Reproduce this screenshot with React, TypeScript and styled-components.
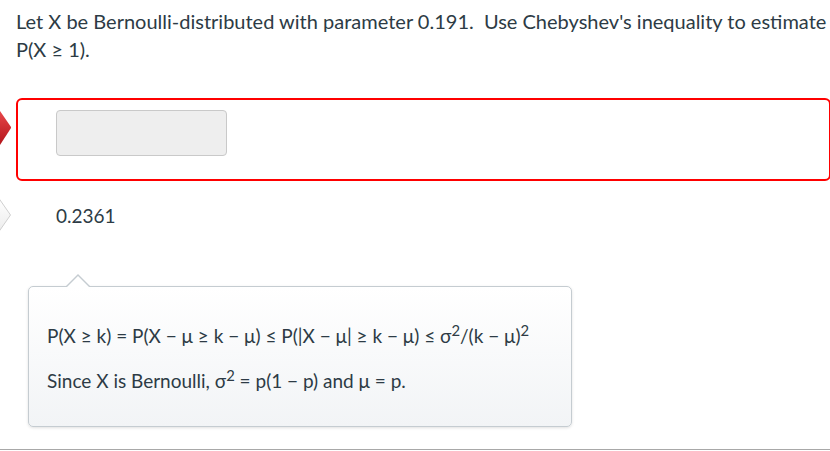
import React from "react";
import styled, { createGlobalStyle } from "styled-components";

const GlobalStyle = createGlobalStyle`
  html, body {
    margin: 0;
    padding: 0;
    background: #fff;
  }
  body {
    font-family: Lato, "Open Sans", sans-serif;
    color: #2d3b45;
    overflow: hidden;
  }
`;

const Page = styled.div`
  width: 830px;
  height: 451px;
  display: flex;
  flex-direction: column;
  overflow: hidden;
`;

const Question = styled.p`
  margin: 0;
  padding: 7px 0 0 16px;
  font-size: 20px;
  line-height: 28px;
  white-space: pre-wrap;
`;

const AnswerRow = styled.div<{ $top: number; $tip: number }>`
  display: flex;
  align-items: flex-start;
  margin-top: ${(p) => p.$top}px;
  & > svg {
    flex: none;
    margin-top: ${(p) => p.$tip}px;
  }
`;

const WrongBox = styled.div`
  flex: none;
  width: 815px;
  box-sizing: border-box;
  margin-left: 4px;
  border: 2px solid #ff0000;
  border-radius: 6px;
  padding: 10px 0 23px 38px;
`;

const Blank = styled.div`
  width: 171px;
  height: 46px;
  box-sizing: border-box;
  background: #eeeeee;
  border: 1px solid #c9c9c9;
  border-radius: 4px;
`;

const CorrectValue = styled.div`
  margin-left: 44px;
  font-size: 19px;
  line-height: 28px;
  padding-top: 4px;
`;

const Popover = styled.div`
  position: relative;
  margin: 54px 0 0 28px;
  width: 544px;
  height: 141px;
  box-sizing: border-box;
  border: 1px solid #c5ccd1;
  border-radius: 5px;
  background: linear-gradient(#ffffff, #f2f4f6);
  box-shadow: 0 1px 3px rgba(0, 0, 0, 0.12);
  padding: 35px 0 0 18px;
  font-size: 19px;
  line-height: 28px;

  &::before,
  &::after {
    content: "";
    position: absolute;
    left: 37px;
    width: 0;
    height: 0;
    border-left: 12px solid transparent;
    border-right: 12px solid transparent;
  }
  &::before {
    top: -13px;
    border-bottom: 12px solid #c5ccd1;
  }
  &::after {
    top: -11px;
    border-bottom: 12px solid #ffffff;
  }
`;

const Line = styled.div<{ $gap?: number }>`
  margin-top: ${(p) => p.$gap ?? 0}px;
  white-space: nowrap;
  sup {
    font-size: 0.78em;
    line-height: 0;
    vertical-align: 0.5em;
  }
`;

const Divider = styled.div`
  margin-top: auto;
  margin-bottom: 1px;
  height: 1px;
  background: #a8a8a8;
`;

const WrongArrow = () => (
  <svg width="12" height="36" viewBox="0 0 12 36">
    <defs>
      <linearGradient id="redg" x1="0" y1="0" x2="0" y2="1">
        <stop offset="0" stopColor="#e8474a" />
        <stop offset="1" stopColor="#b3141a" />
      </linearGradient>
    </defs>
    <polygon points="0,0 11,16 11,17 0,34" fill="url(#redg)" />
  </svg>
);

const RightArrow = () => (
  <svg width="12" height="34" viewBox="0 0 12 34">
    <defs>
      <linearGradient id="grayg" x1="0" y1="0" x2="0" y2="1">
        <stop offset="0" stopColor="#ffffff" />
        <stop offset="1" stopColor="#ececec" />
      </linearGradient>
    </defs>
    <polygon
      points="-1,0.5 10.5,17 -1,33.5"
      fill="url(#grayg)"
      stroke="#cfcfcf"
      strokeWidth="1"
    />
  </svg>
);

export default function App() {
  return (
    <Page>
      <GlobalStyle />
      <Question>
        {"Let X be Bernoulli-distributed with parameter 0.191.  Use Chebyshev's inequality to estimate\nP(X \u2265 1)."}
      </Question>
      <AnswerRow $top={35} $tip={13}>
        <WrongArrow />
        <WrongBox>
          <Blank />
        </WrongBox>
      </AnswerRow>
      <AnswerRow $top={17} $tip={0}>
        <RightArrow />
        <CorrectValue>0.2361</CorrectValue>
      </AnswerRow>
      <Popover>
        <Line>
          P(X ≥ k) = P(X − μ ≥ k − μ) ≤ P(|X − μ| ≥ k − μ) ≤ σ<sup>2</sup>/(k − μ)<sup>2</sup>
        </Line>
        <Line $gap={17}>
          Since X is Bernoulli, σ<sup>2</sup> = p(1 − p) and μ = p.
        </Line>
      </Popover>
      <Divider />
    </Page>
  );
}
